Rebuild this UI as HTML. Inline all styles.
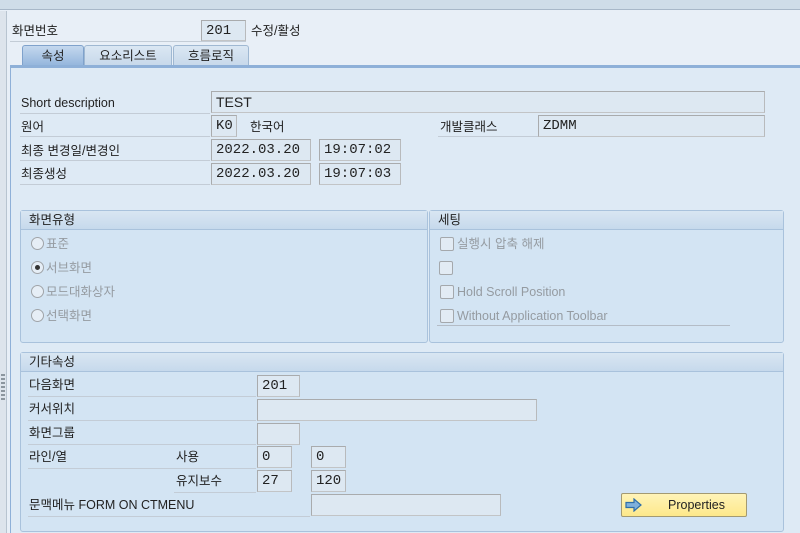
<!DOCTYPE html>
<html><head><meta charset="utf-8"><style>
*{margin:0;padding:0;box-sizing:border-box}
body{width:800px;height:533px;overflow:hidden;background:#e8eff7;font-family:"Liberation Sans","Noto Sans CJK KR",sans-serif;font-size:12.5px;line-height:15px;color:#222;position:relative}
.a{position:absolute;white-space:nowrap;line-height:18px}
.f{position:absolute;background:#dde8f2;border:1px solid #a9abad;border-right-color:#b8babc;border-bottom-color:#c2c4c6;font-family:"Liberation Mono","Noto Sans CJK KR",monospace;font-size:14px;padding:1px 4px;line-height:18px;color:#222}
.u{position:absolute;height:1px;background:#c3ccd6}
.g{position:absolute;background:#d3e4f3;border:1px solid #a9c2dc;border-radius:3px}
.gh{position:absolute;left:0;right:0;top:0;height:19px;background:linear-gradient(#d9e6f2,#c6d9ec);border-bottom:1px solid #a9c2dc;padding:0 8px;font-size:12.5px;line-height:19px}
.r{position:absolute;width:13px;height:13px;border:1px solid #a0a4a8;border-radius:50%;background:#e6eef6}
.c{position:absolute;width:14px;height:14px;border:1px solid #a4a8ac;border-radius:2px;background:#e2ebf4}
.dis{color:#959ba1}
.tab{position:absolute;top:45px;height:21px;background:linear-gradient(#dbe7f3,#c7d8ea);border:1px solid #9fb8d2;border-bottom:none;border-radius:3px 3px 0 0;text-align:center;line-height:21px}
</style></head><body>
<div class="a" style="left:0;top:0;width:800px;height:10px;background:#cfdde8;border-bottom:1px solid #a8b8c8"></div>
<div class="a" style="left:0;top:11px;width:7px;height:522px;background:#dde4ec;border-right:1px solid #b8c4d0"></div>
<div class="a" style="left:1px;top:374px;width:4px;height:28px;background:repeating-linear-gradient(#8c969f 0 2px,transparent 2px 4px)"></div>

<div class="a" style="left:12px;top:22px">화면번호</div>
<div class="u" style="left:10px;top:41px;width:236px"></div>
<div class="f" style="left:201px;top:20px;width:45px;height:21px">201</div>
<div class="a" style="left:251px;top:22px">수정/활성</div>

<div class="tab" style="left:22px;width:62px;background:linear-gradient(#c4d8ee,#93b5dc);border-color:#7fa2cc">속성</div>
<div class="tab" style="left:84px;width:88px">요소리스트</div>
<div class="tab" style="left:173px;width:76px">흐름로직</div>

<div class="a" style="left:10px;top:65px;width:790px;height:468px;background:#deeaf5;border-top:3px solid #8eb0d8;border-left:1px solid #8eb0d8"></div>

<div class="a" style="left:21px;top:94px">Short description</div>
<div class="u" style="left:20px;top:113px;width:190px"></div>
<div class="f" style="left:211px;top:91px;width:554px;height:22px;font-family:'Liberation Sans',sans-serif">TEST</div>
<div class="a" style="left:21px;top:118px">원어</div>
<div class="u" style="left:20px;top:136px;width:190px"></div>
<div class="f" style="left:211px;top:115px;width:26px;height:22px">K0</div>
<div class="a" style="left:250px;top:118px">한국어</div>
<div class="a" style="left:440px;top:118px">개발클래스</div>
<div class="u" style="left:438px;top:136px;width:100px"></div>
<div class="f" style="left:538px;top:115px;width:227px;height:22px">ZDMM</div>
<div class="a" style="left:21px;top:142px">최종 변경일/변경인</div>
<div class="u" style="left:20px;top:160px;width:190px"></div>
<div class="f" style="left:211px;top:139px;width:100px;height:22px">2022.03.20</div>
<div class="f" style="left:319px;top:139px;width:82px;height:22px">19:07:02</div>
<div class="a" style="left:21px;top:165px">최종생성</div>
<div class="u" style="left:20px;top:184px;width:190px"></div>
<div class="f" style="left:211px;top:163px;width:100px;height:22px">2022.03.20</div>
<div class="f" style="left:319px;top:163px;width:82px;height:22px">19:07:03</div>

<div class="g" style="left:20px;top:210px;width:408px;height:133px"><div class="gh">화면유형</div></div>
<div class="r" style="left:31px;top:237px"></div><div class="a dis" style="left:46px;top:235px">표준</div>
<div class="r" style="left:31px;top:261px"></div><div class="a" style="left:35px;top:265px;width:5px;height:5px;border-radius:50%;background:#333"></div><div class="a dis" style="left:46px;top:259px">서브화면</div>
<div class="r" style="left:31px;top:285px"></div><div class="a dis" style="left:46px;top:283px">모드대화상자</div>
<div class="r" style="left:31px;top:309px"></div><div class="a dis" style="left:46px;top:307px">선택화면</div>

<div class="g" style="left:429px;top:210px;width:355px;height:133px"><div class="gh">세팅</div></div>
<div class="c" style="left:440px;top:237px"></div><div class="a dis" style="left:457px;top:235px">실행시 압축 해제</div>
<div class="c" style="left:439px;top:261px"></div>
<div class="c" style="left:440px;top:285px"></div><div class="a dis" style="left:457px;top:283px">Hold Scroll Position</div>
<div class="c" style="left:440px;top:309px"></div><div class="a dis" style="left:457px;top:307px">Without Application Toolbar</div>
<div class="u" style="left:437px;top:325px;width:293px;background:#b4bcc6"></div>

<div class="g" style="left:20px;top:352px;width:764px;height:180px"><div class="gh">기타속성</div></div>
<div class="a" style="left:29px;top:376px">다음화면</div><div class="u" style="left:28px;top:396px;width:228px"></div>
<div class="f" style="left:257px;top:375px;width:43px;height:22px">201</div>
<div class="a" style="left:29px;top:400px">커서위치</div><div class="u" style="left:28px;top:420px;width:228px"></div>
<div class="f" style="left:257px;top:399px;width:280px;height:22px"></div>
<div class="a" style="left:29px;top:424px">화면그룹</div><div class="u" style="left:28px;top:444px;width:228px"></div>
<div class="f" style="left:257px;top:423px;width:43px;height:22px"></div>
<div class="a" style="left:29px;top:448px">라인/열</div><div class="u" style="left:28px;top:468px;width:228px"></div>
<div class="a" style="left:176px;top:448px">사용</div>
<div class="f" style="left:257px;top:446px;width:35px;height:22px">0</div>
<div class="f" style="left:311px;top:446px;width:35px;height:22px">0</div>
<div class="a" style="left:176px;top:472px">유지보수</div><div class="u" style="left:174px;top:492px;width:82px"></div>
<div class="f" style="left:257px;top:470px;width:35px;height:22px">27</div>
<div class="f" style="left:311px;top:470px;width:35px;height:22px">120</div>
<div class="a" style="left:29px;top:496px">문맥메뉴 FORM ON CTMENU</div><div class="u" style="left:28px;top:516px;width:282px"></div>
<div class="f" style="left:311px;top:494px;width:190px;height:22px"></div>

<div class="a" style="left:621px;top:493px;width:126px;height:24px;background:linear-gradient(#fff4b8,#fde88a);border:1px solid #a39a72;border-radius:2px"></div>
<svg class="a" style="left:625px;top:498px" width="18" height="14" viewBox="0 0 18 14"><path d="M1 4.5H9V1L16 7L9 13V9.5H1Z" fill="#7fb0dc" stroke="#2f6ea8" stroke-width="1.2"/></svg>
<div class="a" style="left:668px;top:496px">Properties</div>
</body></html>
